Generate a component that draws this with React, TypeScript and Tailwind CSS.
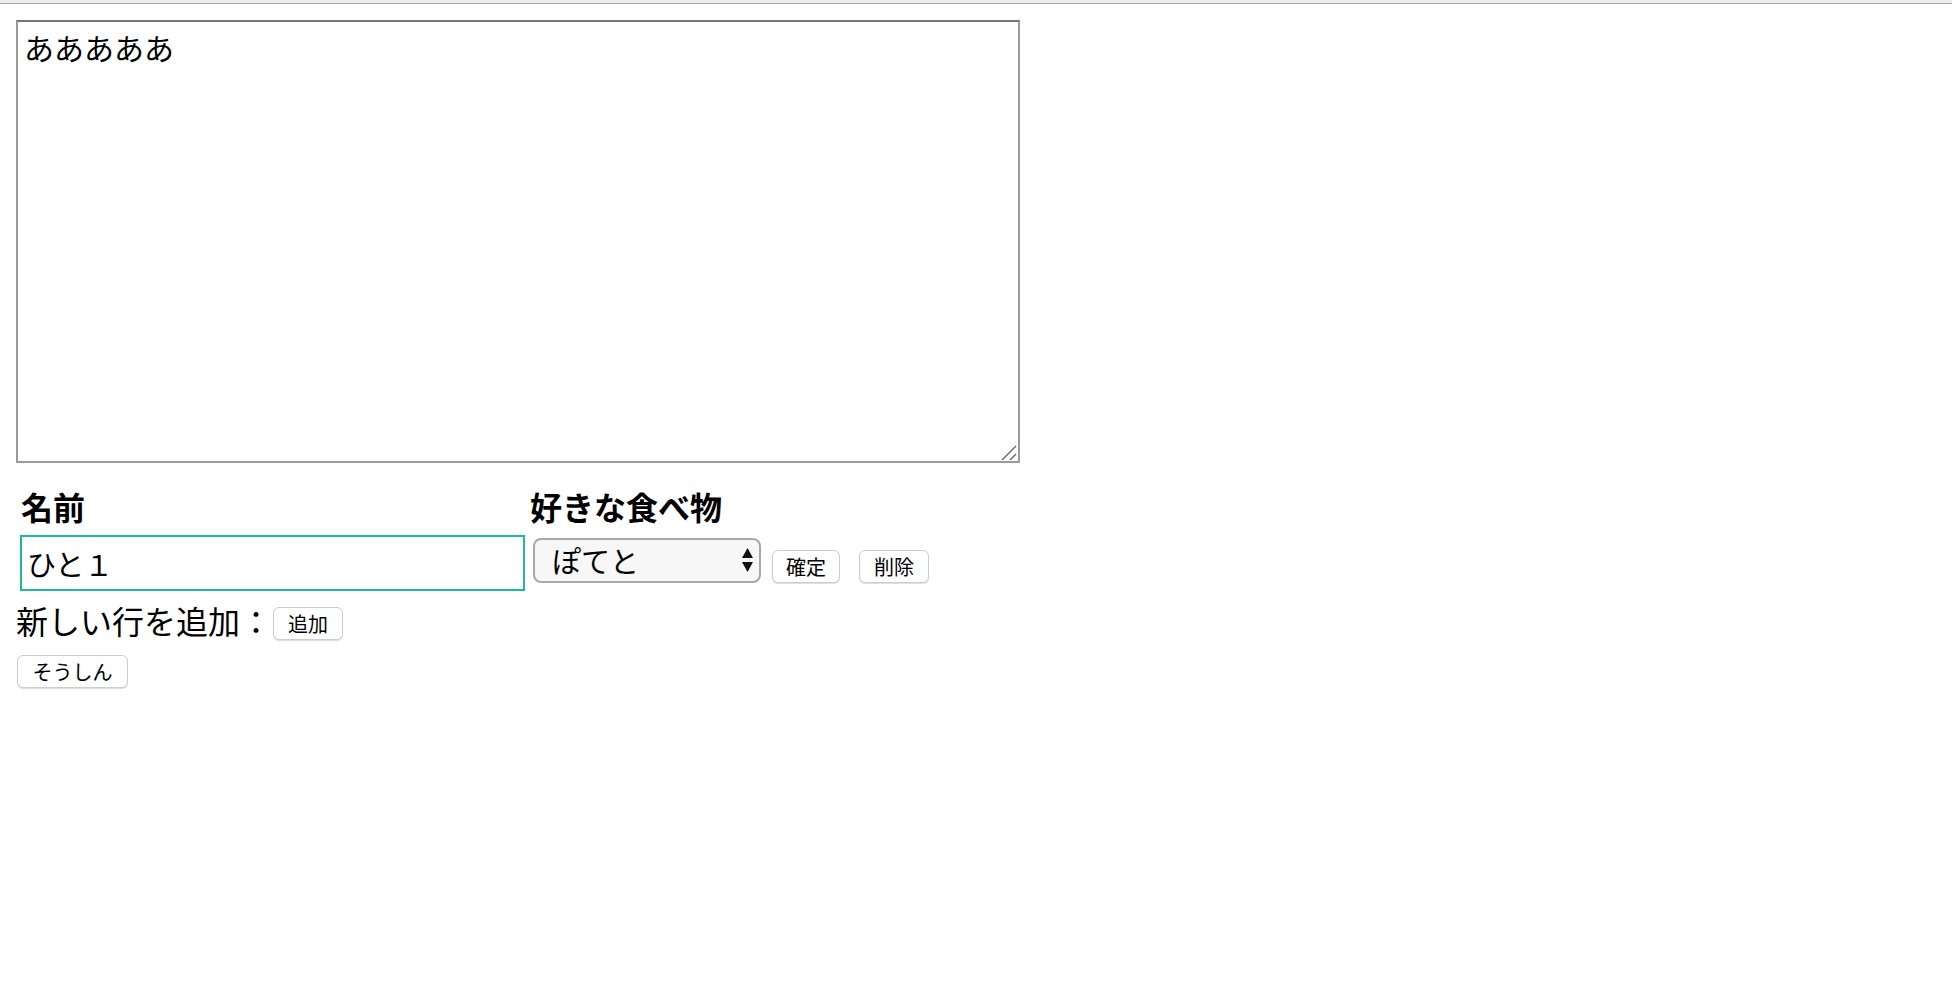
import React from 'react';

const font = { fontFamily: '"Noto Sans CJK JP", "Noto Sans", sans-serif' };

const SmallButton: React.FC<{ label: string; className?: string }> = ({ label, className = '' }) => (
  <button
    type="button"
    className={`h-[33px] rounded-[6px] border border-[#cdcdcd] bg-white text-[20px] leading-none text-black shadow-[0_1px_1px_rgba(0,0,0,0.14)] ${className}`}
  >
    {label}
  </button>
);

export default function App() {
  return (
    <div className="min-h-[990px] w-full bg-white text-black" style={font}>
      {/* browser top edge */}
      <div className="h-[4px] bg-[#ececec] border-b border-[#a9a9a9]" />

      <div className="pl-4 pt-4">
        <div className="relative w-[1004px]">
          <textarea
            defaultValue="あああああ"
            className="block h-[443px] w-[1004px] resize-none border-2 border-[#9a9a9a] border-t-[#767676] px-[6px] pt-[7px] text-[30px] leading-[1.25] text-black outline-none"
          />
          {/* resize grip */}
          <svg className="pointer-events-none absolute bottom-[2px] right-[3px]" width="16" height="16" viewBox="0 0 16 16">
            <path d="M1 15 L15 1" stroke="#6b6b6b" strokeWidth="1.4" />
            <path d="M9 15 L15 9" stroke="#6b6b6b" strokeWidth="1.4" />
          </svg>
        </div>

        <div className="mt-[23px] flex">
          <div className="w-[514px]">
            <div className="pl-[5px] text-[32px] font-bold leading-[40px]">名前</div>
            <input
              defaultValue="ひと１"
              className="mt-[9px] ml-[4px] block h-[56px] w-[505px] border-2 border-[#1fb99a] px-[5px] text-[29px] text-black outline-none"
            />
          </div>
          <div>
            <div className="text-[32px] font-bold leading-[40px]">好きな食べ物</div>
            <div className="mt-[12px] flex items-start">
              <div className="relative ml-[3px]">
                <select
                  defaultValue="potato"
                  className="block h-[45px] w-[228px] appearance-none rounded-[8px] border-2 border-[#a8a8a8] bg-[#f7f7f7] pl-[17px] text-[29px] leading-none text-black outline-none"
                >
                  <option value="potato">ぽてと</option>
                  <option value="tomato">とまと</option>
                </select>
                <svg
                  className="pointer-events-none absolute right-[8px] top-[10px]"
                  width="11"
                  height="25"
                  viewBox="0 0 11 25"
                >
                  <path d="M5.5 0 L11 10 L0 10 Z" fill="#111" />
                  <path d="M0 14 L11 14 L5.5 24 Z" fill="#111" />
                </svg>
              </div>
              <SmallButton label="確定" className="ml-[11px] mt-[12px] w-[68px]" />
              <SmallButton label="削除" className="ml-[19px] mt-[12px] w-[70px]" />
            </div>
          </div>
        </div>

        <div className="mt-[9px] flex items-start">
          <span className="text-[32px] leading-[40px]">新しい行を追加：</span>
          <SmallButton label="追加" className="ml-[1px] mt-[7px] w-[70px]" />
        </div>

        <div className="mt-[15px]">
          <SmallButton label="そうしん" className="ml-[1px] w-[111px]" />
        </div>
      </div>
    </div>
  );
}
